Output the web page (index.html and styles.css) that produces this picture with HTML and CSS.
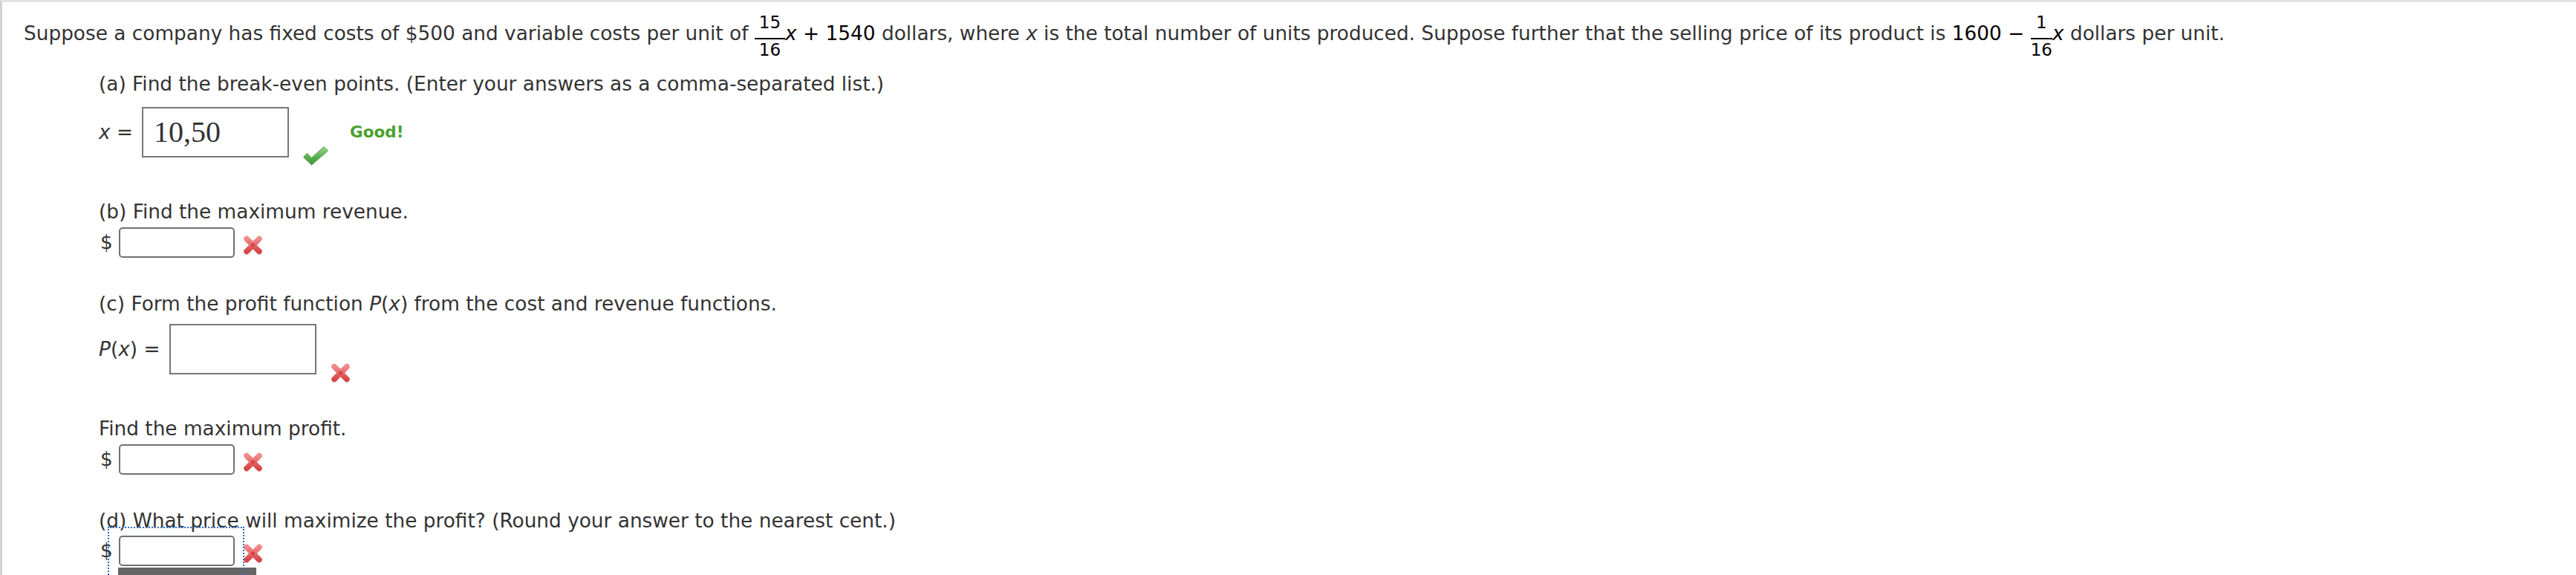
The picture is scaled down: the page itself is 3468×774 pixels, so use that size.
FILE: index.html
```html
<!DOCTYPE html>
<html lang="en">
<head>
<meta charset="utf-8">
<title>Break-even question</title>
<link rel="stylesheet" href="styles.css">
</head>
<body>
<div class="frame">
  <p class="stem">Suppose a company has fixed costs of $500 and variable costs per unit of <span class="frac"><span class="num">15</span><span class="den">16</span></span><span class="m"><i>x</i> + 1540</span> dollars, where <i>x</i> is the total number of units produced. Suppose further that the selling price of its product is <span class="m">1600 −</span> <span class="frac"><span class="num">1</span><span class="den">16</span></span><span class="m"><i>x</i></span> dollars per unit.</p>

  <div class="parts">
    <p class="q q-a">(a) Find the break-even points. (Enter your answers as a comma-separated list.)</p>
    <div class="row row-big row-a">
      <span class="lbl"><i>x</i> =</span>
      <span class="box box-big"><span class="val">10,50</span></span>
      <svg class="mark check" width="36" height="27" viewBox="0 0 36 27" aria-hidden="true">
        <defs>
          <linearGradient id="gck" x1="0" y1="0" x2="0" y2="1">
            <stop offset="0" stop-color="#9ad88a"/>
            <stop offset="0.55" stop-color="#5cb352"/>
            <stop offset="1" stop-color="#3f8f3a"/>
          </linearGradient>
        </defs>
        <path d="M1.5 15.5 L6.5 10.5 L12.5 16.5 L29 1.5 L34.5 7 L12.5 26 Z" fill="url(#gck)" stroke="#4f9e47" stroke-width="1" stroke-linejoin="round"/>
      </svg>
      <span class="good">Good!</span>
    </div>

    <p class="q q-b">(b) Find the maximum revenue.</p>
    <div class="row row-small row-b">
      <span class="dollar">$</span>
      <span class="box box-small"></span>
      <svg class="mark cross" width="27" height="26" viewBox="0 0 27 26" aria-hidden="true">
        <defs>
          <linearGradient id="gx1" x1="0" y1="0" x2="0" y2="1">
            <stop offset="0" stop-color="#f28a8a"/>
            <stop offset="1" stop-color="#d64646"/>
          </linearGradient>
        </defs>
        <path d="M5 4.5 L22 21.5 M22 4.5 L5 21.5" stroke="url(#gx1)" stroke-width="7.5" stroke-linecap="round"/>
        <circle cx="13.5" cy="13" r="2.5" fill="#d24343"/>
      </svg>
    </div>

    <p class="q q-c">(c) Form the profit function <i>P</i>(<i>x</i>) from the cost and revenue functions.</p>
    <div class="row row-big row-c">
      <span class="lbl"><i>P</i>(<i>x</i>) =</span>
      <span class="box box-big"></span>
      <svg class="mark cross cross-low" width="27" height="26" viewBox="0 0 27 26" aria-hidden="true">
        <defs>
          <linearGradient id="gx2" x1="0" y1="0" x2="0" y2="1">
            <stop offset="0" stop-color="#f28a8a"/>
            <stop offset="1" stop-color="#d64646"/>
          </linearGradient>
        </defs>
        <path d="M5 4.5 L22 21.5 M22 4.5 L5 21.5" stroke="url(#gx2)" stroke-width="7.5" stroke-linecap="round"/>
        <circle cx="13.5" cy="13" r="2.5" fill="#d24343"/>
      </svg>
    </div>

    <p class="q q-p">Find the maximum profit.</p>
    <div class="row row-small row-p">
      <span class="dollar">$</span>
      <span class="box box-small"></span>
      <svg class="mark cross" width="27" height="26" viewBox="0 0 27 26" aria-hidden="true">
        <defs>
          <linearGradient id="gx3" x1="0" y1="0" x2="0" y2="1">
            <stop offset="0" stop-color="#f28a8a"/>
            <stop offset="1" stop-color="#d64646"/>
          </linearGradient>
        </defs>
        <path d="M5 4.5 L22 21.5 M22 4.5 L5 21.5" stroke="url(#gx3)" stroke-width="7.5" stroke-linecap="round"/>
        <circle cx="13.5" cy="13" r="2.5" fill="#d24343"/>
      </svg>
    </div>

    <div class="part-d">
      <p class="q q-d">(d) What price will maximize the profit? (Round your answer to the nearest cent.)</p>
      <div class="row row-small row-d">
        <span class="dollar">$</span>
        <span class="box box-small"></span>
        <svg class="mark cross" width="27" height="26" viewBox="0 0 27 26" aria-hidden="true">
          <defs>
            <linearGradient id="gx4" x1="0" y1="0" x2="0" y2="1">
              <stop offset="0" stop-color="#f28a8a"/>
              <stop offset="1" stop-color="#d64646"/>
            </linearGradient>
          </defs>
          <path d="M5 4.5 L22 21.5 M22 4.5 L5 21.5" stroke="url(#gx4)" stroke-width="7.5" stroke-linecap="round"/>
          <circle cx="13.5" cy="13" r="2.5" fill="#d24343"/>
        </svg>
      </div>
      <div class="palette"></div>
      <div class="focus"></div>
    </div>
  </div>
</div>
</body>
</html>
```

FILE: styles.css
```css
html, body {
  margin: 0;
  padding: 0;
  background: #fff;
  overflow: hidden;
}

.frame {
  box-sizing: border-box;
  height: 774px;
  border-top: 3px solid #e3e3e3;
  border-left: 3px solid #d3d3d3;
  padding-left: 29px;
  font-family: "DejaVu Sans", Verdana, sans-serif;
  font-size: 26.35px;
  color: #333;
}

i {
  font-style: italic;
}

.stem {
  margin: 0;
  padding-top: 13.6px;
  white-space: nowrap;
}

.m {
  color: #000;
}

.frac {
  display: inline-flex;
  flex-direction: column;
  vertical-align: 16px;
  font-size: 23px;
  color: #000;
  text-align: center;
}

.frac .num {
  line-height: 27px;
  padding: 0 6px 7.4px;
  border-bottom: 2px solid #000;
}

.frac .den {
  line-height: 27px;
  padding-top: 1px;
}

.parts {
  padding-left: 101px;
}

.q {
  margin: 0;
  line-height: 30px;
  white-space: nowrap;
}

.q-a { margin-top: 17px; }
.q-b { margin-top: 58px; }
.q-c { margin-top: 47px; }
.q-p { margin-top: 58px; }
.q-d { margin-top: 47px; }

.row {
  display: flex;
  align-items: center;
}

.row-a { margin-top: 16px; }
.row-b { margin-top: 6px; }
.row-c { margin-top: 12px; }
.row-p { margin-top: 6px; }
.row-d { margin-top: 5px; }

.lbl {
  margin-right: 12px;
  line-height: 30px;
}

.dollar {
  width: 27px;
  padding-left: 2px;
  box-sizing: border-box;
  line-height: 30px;
}

.box {
  box-sizing: border-box;
  border: 2px solid #777;
  background: #fff;
  display: flex;
  align-items: center;
}

.box-big {
  width: 198px;
  height: 68px;
}

.box-small {
  width: 156px;
  height: 41px;
  border-color: #707070;
  border-radius: 5px;
}

.val {
  font-family: "Liberation Serif", "Times New Roman", serif;
  font-size: 40px;
  color: #333;
  padding-left: 14px;
}

.mark {
  display: block;
  flex: none;
}

.check {
  align-self: flex-end;
  margin-left: 18px;
  margin-bottom: -11px;
}

.good {
  margin-left: 28px;
  font-weight: bold;
  font-size: 21.5px;
  color: #4b9f2f;
}

.cross {
  margin-left: 11px;
  margin-top: 8px;
}

.cross-low {
  align-self: flex-end;
  margin-left: 19px;
  margin-top: 0;
  margin-bottom: -11px;
}

.part-d {
  position: relative;
}

.palette {
  width: 186px;
  height: 12px;
  margin-top: 2px;
  margin-left: 26px;
  background: #666;
}

.focus {
  position: absolute;
  left: 12px;
  top: 23px;
  width: 180px;
  height: 90px;
  border: 2px dotted #2d6cc4;
  border-bottom: none;
  pointer-events: none;
}
```
